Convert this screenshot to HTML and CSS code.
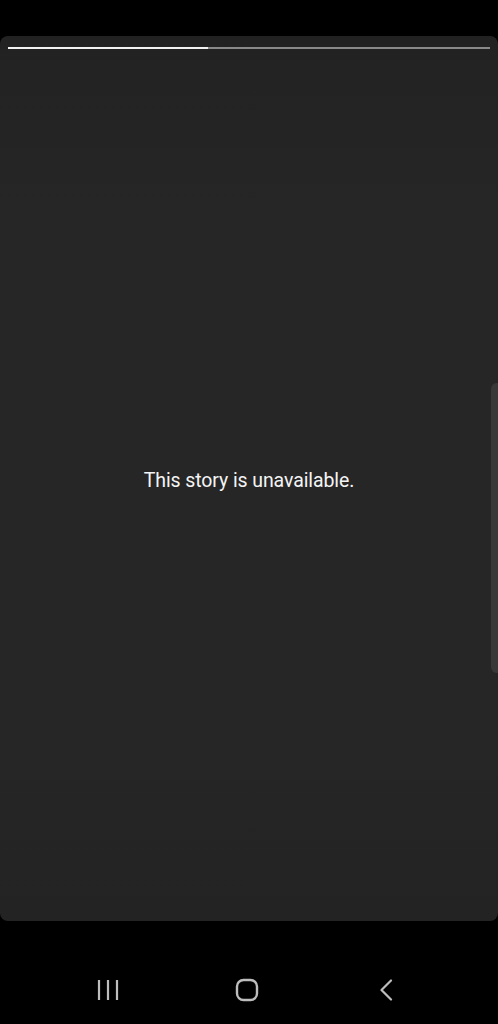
FILE: index.html
```html
<!DOCTYPE html>
<html>
<head>
<meta charset="utf-8">
<link rel="stylesheet" href="styles.css">
</head>
<body>
<div class="screen">
  <div class="status"></div>
  <div class="card">
    <div class="progress">
      <div class="seg"><div class="fill"></div></div>
      <div class="seg"></div>
    </div>
    <div class="message">This story is unavailable.</div>
    <div class="scroll"></div>
  </div>
  <div class="navbar">
    <svg class="nav-icon recent" width="22" height="22" viewBox="0 0 22 22"><path d="M2 1v20M11 1v20M20 1v20" stroke="#bdbdbd" stroke-width="2.2" fill="none"/></svg>
    <svg class="nav-icon home" width="24" height="24" viewBox="0 0 24 24"><rect x="2" y="2" width="20" height="20" rx="6.5" stroke="#bdbdbd" stroke-width="2.4" fill="none"/></svg>
    <svg class="nav-icon back" width="14" height="22" viewBox="0 0 14 22"><path d="M12 1.5L2.5 11l9.5 9.5" stroke="#bdbdbd" stroke-width="2.2" fill="none" stroke-linecap="round" stroke-linejoin="round"/></svg>
  </div>
</div>
</body>
</html>
```
FILE: styles.css
```css
html, body {
  margin: 0;
  padding: 0;
  background: #000;
}
.screen {
  width: 498px;
  height: 1024px;
  display: flex;
  flex-direction: column;
  background: #000;
  font-family: Roboto, "Noto Sans", sans-serif;
}
.status {
  height: 36px;
  flex: none;
}
.card {
  position: relative;
  height: 885px;
  flex: none;
  border-radius: 8px;
  background: linear-gradient(#222222 0%, #262626 20%, #262626 80%, #232323 100%);
  display: flex;
  flex-direction: column;
  align-items: center;
}
.progress {
  margin-top: 11px;
  width: 482px;
  height: 2px;
  display: flex;
  align-self: flex-start;
  margin-left: 8px;
}
.seg {
  flex: 1;
  background: #8a8a8a;
  height: 2px;
}
.seg .fill {
  width: 100%;
  height: 100%;
  background: #f2f2f2;
}
.seg + .seg {
  flex: 1.41;
}
.message {
  margin-top: 420px;
  color: #f4f4f4;
  font-size: 19.5px;
  line-height: 24px;
  letter-spacing: -0.1px;
}
.scroll {
  position: absolute;
  right: 0;
  top: 347px;
  width: 7px;
  height: 290px;
  background: #383838;
  border-radius: 6px 0 0 6px;
}
.navbar {
  flex: 1;
  display: flex;
  align-items: flex-start;
  padding: 57px 0 0 97px;
}
.nav-icon {
  display: block;
  flex: none;
}
.recent {
  margin-top: 1px;
}
.home {
  margin-left: 116px;
}
.back {
  margin-left: 120px;
  margin-top: 1px;
}
```
